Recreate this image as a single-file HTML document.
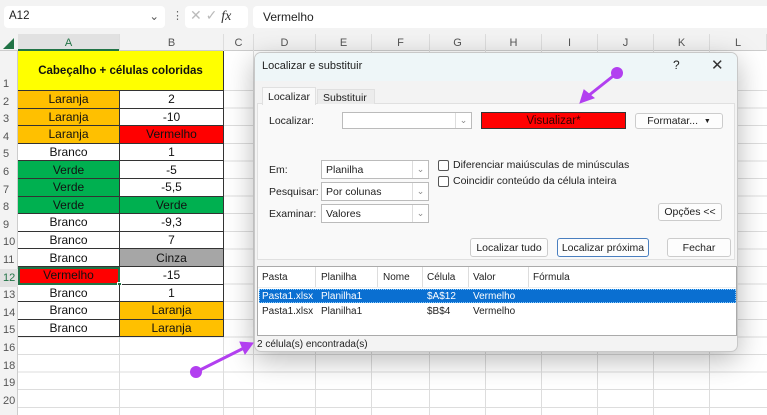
<!DOCTYPE html>
<html><head><meta charset="utf-8"><style>
*{margin:0;padding:0;box-sizing:border-box}
body{width:767px;height:415px;overflow:hidden;background:#fff;font-family:"Liberation Sans",sans-serif;font-size:11px;color:#222;position:relative}
.a{position:absolute}
.c{position:absolute;display:flex;align-items:center;justify-content:center;font-size:12px;color:#111;border-right:1px solid #333;border-bottom:1px solid #333}
.rh{position:absolute;left:0;width:18px;color:#555;font-size:11px;padding-left:3px;display:flex;align-items:flex-end;padding-bottom:1px}
.ch{position:absolute;top:34px;height:17px;color:#555;font-size:11px;display:flex;align-items:center;justify-content:center;border-right:1px solid #ddd}
.btn{position:absolute;background:#fdfdfd;border:1px solid #ccc;border-radius:3px;display:flex;align-items:center;justify-content:center;font-size:10.5px;color:#222}
.sel{position:absolute;background:#fff;border:1px solid #bbb;font-size:10.5px;padding-left:4px;display:flex;align-items:center}
.sel i{position:absolute;right:0;top:0;bottom:0;width:16px;border-left:1px solid #ddd;font-style:normal;color:#888;font-size:9px;display:flex;align-items:center;justify-content:center}
.lb{position:absolute;font-size:10.5px;color:#222}
.cb{position:absolute;width:11px;height:11px;border:1px solid #555;border-radius:2px;background:#fff}
.lt{position:absolute;font-size:10px;color:#222}
.v{position:absolute;top:51px;width:1px;height:364px;background:#ddd}
</style></head><body>
<div class="a" style="left:0;top:0;width:767px;height:34px;background:#f3f3f3"></div>
<div class="a" style="left:4px;top:6px;width:161px;height:22px;background:#fff;border-radius:4px;font-size:11.5px;padding:4px 5px">A12<span style="position:absolute;right:6px;top:3px;color:#555">&#8964;</span></div>
<div class="a" style="left:172px;top:9px;color:#666;font-size:11px">&#8942;</div>
<div class="a" style="left:185px;top:6px;width:63px;height:22px;background:#fff;border-radius:4px;color:#bbb;font-size:14px;padding:1px 5px">✕ ✓ <i style="color:#333;font-family:'Liberation Serif',serif;font-size:14px">fx</i></div>
<div class="a" style="left:253px;top:6px;width:514px;height:22px;background:#fff;border-radius:4px 0 0 4px;font-size:12px;padding:4px 10px">Vermelho</div>
<div class="a" style="left:0;top:34px;width:767px;height:17px;background:#f3f3f3;border-bottom:1px solid #ccc"></div>
<div class="a" style="left:0;top:51px;width:18px;height:364px;background:#f3f3f3;border-right:1px solid #ccc"></div>
<div class="a" style="left:18px;top:34px;width:102px;height:17px;background:#e1e1e1;border-bottom:2px solid #217346"></div>
<div class="a" style="left:0;top:269px;width:18px;height:18px;background:#e1e1e1"></div>
<div class="a" style="left:3px;top:38px;width:0;height:0;border-left:11px solid transparent;border-bottom:11px solid #217346"></div>
<div class="ch" style="left:18px;width:102px;color:#217346">A</div>
<div class="ch" style="left:120px;width:104px">B</div>
<div class="ch" style="left:224px;width:30px">C</div>
<div class="ch" style="left:254px;width:62px">D</div>
<div class="ch" style="left:316px;width:56px">E</div>
<div class="ch" style="left:372px;width:58px">F</div>
<div class="ch" style="left:430px;width:56px">G</div>
<div class="ch" style="left:486px;width:56px">H</div>
<div class="ch" style="left:542px;width:56px">I</div>
<div class="ch" style="left:598px;width:56px">J</div>
<div class="ch" style="left:654px;width:56px">K</div>
<div class="ch" style="left:710px;width:57px">L</div>
<div class="a" style="left:18px;top:91px;width:749px;height:324px;background:repeating-linear-gradient(180deg,transparent 0,transparent 16.6px,#ddd 16.6px,#ddd 17.6px)"></div>
<div class="a" style="left:18px;top:51px;width:749px;height:40px;border-bottom:1px solid #ddd"></div>
<div class="v" style="left:119px"></div><div class="v" style="left:223px"></div><div class="v" style="left:253px"></div><div class="v" style="left:315px"></div><div class="v" style="left:371px"></div><div class="v" style="left:429px"></div><div class="v" style="left:485px"></div><div class="v" style="left:541px"></div><div class="v" style="left:597px"></div><div class="v" style="left:653px"></div><div class="v" style="left:709px"></div>
<div class="rh" style="top:51px;height:40px">1</div>
<div class="rh" style="top:91px;height:17.6px">2</div>
<div class="rh" style="top:108.6px;height:17.6px">3</div>
<div class="rh" style="top:126.2px;height:17.6px">4</div>
<div class="rh" style="top:143.8px;height:17.6px">5</div>
<div class="rh" style="top:161.4px;height:17.6px">6</div>
<div class="rh" style="top:179px;height:17.6px">7</div>
<div class="rh" style="top:196.6px;height:17.6px">8</div>
<div class="rh" style="top:214.2px;height:17.6px">9</div>
<div class="rh" style="top:231.8px;height:17.6px">10</div>
<div class="rh" style="top:249.4px;height:17.6px">11</div>
<div class="rh" style="top:267px;height:17.6px;color:#217346">12</div>
<div class="rh" style="top:284.6px;height:17.6px">13</div>
<div class="rh" style="top:302.2px;height:17.6px">14</div>
<div class="rh" style="top:319.8px;height:17.6px">15</div>
<div class="rh" style="top:337.4px;height:17.6px">16</div>
<div class="rh" style="top:355px;height:17.6px">18</div>
<div class="rh" style="top:372.6px;height:17.6px">19</div>
<div class="rh" style="top:390.2px;height:17.6px">20</div>
<div class="c" style="left:18px;top:51px;width:206px;height:40px;background:#ffff00;font-weight:bold;font-size:11.5px">Cabeçalho + células coloridas</div>
<div class="c" style="left:18px;top:91px;width:102px;height:17.6px;background:#ffc000">Laranja</div><div class="c" style="left:120px;top:91px;width:104px;height:17.6px;background:#fff">2</div>
<div class="c" style="left:18px;top:108.6px;width:102px;height:17.6px;background:#ffc000">Laranja</div><div class="c" style="left:120px;top:108.6px;width:104px;height:17.6px;background:#fff">-10</div>
<div class="c" style="left:18px;top:126.2px;width:102px;height:17.6px;background:#ffc000">Laranja</div><div class="c" style="left:120px;top:126.2px;width:104px;height:17.6px;background:#ff0000">Vermelho</div>
<div class="c" style="left:18px;top:143.8px;width:102px;height:17.6px;background:#fff">Branco</div><div class="c" style="left:120px;top:143.8px;width:104px;height:17.6px;background:#fff">1</div>
<div class="c" style="left:18px;top:161.4px;width:102px;height:17.6px;background:#00b050">Verde</div><div class="c" style="left:120px;top:161.4px;width:104px;height:17.6px;background:#fff">-5</div>
<div class="c" style="left:18px;top:179px;width:102px;height:17.6px;background:#00b050">Verde</div><div class="c" style="left:120px;top:179px;width:104px;height:17.6px;background:#fff">-5,5</div>
<div class="c" style="left:18px;top:196.6px;width:102px;height:17.6px;background:#00b050">Verde</div><div class="c" style="left:120px;top:196.6px;width:104px;height:17.6px;background:#00b050">Verde</div>
<div class="c" style="left:18px;top:214.2px;width:102px;height:17.6px;background:#fff">Branco</div><div class="c" style="left:120px;top:214.2px;width:104px;height:17.6px;background:#fff">-9,3</div>
<div class="c" style="left:18px;top:231.8px;width:102px;height:17.6px;background:#fff">Branco</div><div class="c" style="left:120px;top:231.8px;width:104px;height:17.6px;background:#fff">7</div>
<div class="c" style="left:18px;top:249.4px;width:102px;height:17.6px;background:#fff">Branco</div><div class="c" style="left:120px;top:249.4px;width:104px;height:17.6px;background:#a6a6a6">Cinza</div>
<div class="c" style="left:18px;top:267px;width:102px;height:17.6px;background:#ff0000;outline:2px solid #217346;outline-offset:-2px">Vermelho</div><div class="c" style="left:120px;top:267px;width:104px;height:17.6px;background:#fff">-15</div>
<div class="a" style="left:117px;top:282px;width:5px;height:5px;background:#217346;border:1px solid #fff"></div>
<div class="c" style="left:18px;top:284.6px;width:102px;height:17.6px;background:#fff">Branco</div><div class="c" style="left:120px;top:284.6px;width:104px;height:17.6px;background:#fff">1</div>
<div class="c" style="left:18px;top:302.2px;width:102px;height:17.6px;background:#fff">Branco</div><div class="c" style="left:120px;top:302.2px;width:104px;height:17.6px;background:#ffc000">Laranja</div>
<div class="c" style="left:18px;top:319.8px;width:102px;height:17.6px;background:#fff">Branco</div><div class="c" style="left:120px;top:319.8px;width:104px;height:17.6px;background:#ffc000">Laranja</div>
<div class="a" style="left:254px;top:52px;width:484px;height:300px;background:#f3f3f3;border:1px solid #c8c8c8;border-radius:7px;box-shadow:0 8px 28px rgba(0,0,0,.28);overflow:hidden">
 <div class="a" style="left:0;top:0;width:484px;height:28px;background:#eef6f8"></div>
 <div class="a" style="left:7px;top:7px;font-size:11px;color:#222">Localizar e substituir</div>
 <div class="a" style="left:418px;top:5px;font-size:12px">?</div>
 <div class="a" style="left:456px;top:3px;font-size:15px;color:#333">✕</div>
 <div class="a" style="left:2px;top:50px;width:478px;height:157px;background:#f9f9f9;border:1px solid #e0e0e0"></div>
 <div class="a" style="left:7px;top:34px;width:54px;height:18px;background:#f9f9f9;border:1px solid #e0e0e0;border-bottom:none;font-size:10.5px;padding:3px 0 0 5px">Localizar</div>
 <div class="a" style="left:62px;top:36px;width:58px;height:15px;background:#ececec;border:1px solid #e0e0e0;border-bottom:none;font-size:10.5px;padding:2px 0 0 5px">Substituir</div>
 <div class="lb" style="left:14px;top:62px">Localizar:</div>
 <div class="sel" style="left:87px;top:59px;width:130px;height:17px"><i>&#8964;</i></div>
 <div class="a" style="left:226px;top:59px;width:145px;height:17px;background:#ff0000;border:1px solid #333;font-size:11.5px;display:flex;align-items:center;justify-content:center;color:#300">Visualizar*</div>
 <div class="btn" style="left:380px;top:60px;width:88px;height:16px">Formatar... &nbsp;<span style="font-size:7px">▼</span></div>
 <div class="lb" style="left:14px;top:111px">Em:</div>
 <div class="sel" style="left:66px;top:107px;width:108px;height:19px">Planilha<i>&#8964;</i></div>
 <div class="lb" style="left:14px;top:133px">Pesquisar:</div>
 <div class="sel" style="left:66px;top:129px;width:108px;height:19px">Por colunas<i>&#8964;</i></div>
 <div class="lb" style="left:14px;top:155px">Examinar:</div>
 <div class="sel" style="left:66px;top:151px;width:108px;height:19px">Valores<i>&#8964;</i></div>
 <div class="cb" style="left:183px;top:107px"></div><div class="lb" style="left:198px;top:106px">Diferenciar maiúsculas de minúsculas</div>
 <div class="cb" style="left:183px;top:123px"></div><div class="lb" style="left:198px;top:122px">Coincidir conteúdo da célula inteira</div>
 <div class="btn" style="left:403px;top:150px;width:64px;height:18px">Opções &lt;&lt;</div>
 <div class="btn" style="left:215px;top:185px;width:78px;height:19px">Localizar tudo</div>
 <div class="btn" style="left:302px;top:185px;width:92px;height:19px;border-color:#4a7fbf">Localizar próxima</div>
 <div class="btn" style="left:412px;top:185px;width:64px;height:19px">Fechar</div>
 <div class="a" style="left:2px;top:213px;width:480px;height:70px;background:#fff;border:1px solid #aaa"></div>
 <div class="a" style="left:3px;top:214px;width:478px;height:21px;border-bottom:1px solid #eee;background:linear-gradient(90deg,transparent 57px,#ddd 57px,#ddd 58px,transparent 58px,transparent 119px,#ddd 119px,#ddd 120px,transparent 120px,transparent 164px,#ddd 164px,#ddd 165px,transparent 165px,transparent 210px,#ddd 210px,#ddd 211px,transparent 211px,transparent 270px,#ddd 270px,#ddd 271px,transparent 271px)"></div>
 <div class="lt" style="left:7px;top:219px">Pasta</div><div class="lt" style="left:66px;top:219px">Planilha</div><div class="lt" style="left:128px;top:219px">Nome</div><div class="lt" style="left:172px;top:219px">Célula</div><div class="lt" style="left:218px;top:219px">Valor</div><div class="lt" style="left:278px;top:219px">Fórmula</div>
 <div class="a" style="left:4px;top:236px;width:477px;height:14px;background:#0a6fd1;border:1px dotted #8cf"></div>
 <div class="lt" style="left:7px;top:238px;color:#fff">Pasta1.xlsx</div><div class="lt" style="left:66px;top:238px;color:#fff">Planilha1</div><div class="lt" style="left:172px;top:238px;color:#fff">$A$12</div><div class="lt" style="left:218px;top:238px;color:#fff">Vermelho</div>
 <div class="lt" style="left:7px;top:253px">Pasta1.xlsx</div><div class="lt" style="left:66px;top:253px">Planilha1</div><div class="lt" style="left:172px;top:253px">$B$4</div><div class="lt" style="left:218px;top:253px">Vermelho</div>
 <div class="lt" style="left:2px;top:286px;font-size:10px">2 célula(s) encontrada(s)</div>
</div>
<svg class="a" style="left:0;top:0" width="767" height="415">
 <g stroke="#b23ff0" stroke-width="3" fill="#b23ff0" stroke-linecap="round">
  <line x1="617" y1="73" x2="588" y2="96"/>
  <polygon points="580,103 584,90 594,98" stroke-width="1"/>
  <circle cx="617" cy="73" r="6" stroke="none"/>
  <line x1="196" y1="372" x2="244" y2="348"/>
  <polygon points="253,343 240,342 245,354" stroke-width="1"/>
  <circle cx="196" cy="372" r="6" stroke="none"/>
 </g>
</svg>
</body></html>
